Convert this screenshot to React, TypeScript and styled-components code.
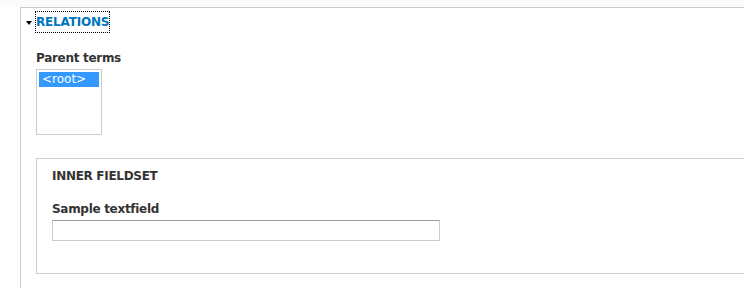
import React from "react";
import styled, { createGlobalStyle } from "styled-components";

const Global = createGlobalStyle`
  html, body { margin: 0; padding: 0; background: #fff; }
  body {
    font-family: "DejaVu Sans", Verdana, sans-serif;
    color: #333;
    overflow: hidden;
  }
`;

const Page = styled.div`
  width: 744px;
  height: 288px;
  overflow: hidden;
  background: linear-gradient(#fbfbfb 0, #fbfbfb 7px, #fff 7px);
`;

const Fieldset = styled.fieldset<{ $inner?: boolean }>`
  margin: ${(p) => (p.$inner ? "0" : "7px 0 0 20px")};
  padding: ${(p) => (p.$inner ? "10px 15px 32px" : "3px 0 40px 0")};
  border: 1px solid #ccc;
  min-width: 0;
  width: ${(p) => (p.$inner ? "740px" : "760px")};
  box-sizing: border-box;
  background: #fff;
`;

const LegendRow = styled.div`
  display: flex;
  align-items: center;
  height: 22px;
  padding-left: 5px;
  gap: 4px;
`;

const Toggle = styled.span`
  width: 0;
  height: 0;
  border-left: 3.5px solid transparent;
  border-right: 3.5px solid transparent;
  border-top: 4px solid #000;
  margin-top: 2px;
`;

const LegendLink = styled.a`
  color: #0074bd;
  text-decoration: none;
  font-weight: bold;
  font-size: 12px;
  text-transform: uppercase;
  outline: 1px dotted #000;
  outline-offset: 0;
  padding: 3px 0;
  line-height: 14px;
  letter-spacing: -0.2px;
`;

const Wrapper = styled.div`
  padding: 18px 0 0 15px;
`;

const Label = styled.label`
  display: block;
  font-weight: bold;
  font-size: 12px;
  line-height: 15px;
  margin-bottom: 3px;
  letter-spacing: -0.3px;
`;

const Select = styled.div`
  width: 66px;
  height: 66px;
  box-sizing: border-box;
  border: 1px solid #ccc;
  padding: 2px;
  margin-bottom: 23px;
`;

const Option = styled.div<{ $selected?: boolean }>`
  height: 15px;
  line-height: 15px;
  font-size: 12px;
  padding-left: 3px;
  background: ${(p) => (p.$selected ? "#3399ff" : "transparent")};
  color: ${(p) => (p.$selected ? "#fff" : "#333")};
`;

const InnerLegend = styled.div`
  font-weight: bold;
  font-size: 12px;
  line-height: 15px;
  text-transform: uppercase;
  margin-bottom: 18px;
  letter-spacing: -0.3px;
`;

const TextInput = styled.input`
  display: block;
  width: 388px;
  height: 21px;
  box-sizing: border-box;
  border: 1px solid #ccc;
  border-top-color: #999;
  padding: 2px 4px;
  margin: 0;
  font-family: inherit;
`;

export default function App() {
  return (
    <Page>
      <Global />
      <Fieldset>
        <LegendRow>
          <Toggle />
          <LegendLink href="#">Relations</LegendLink>
        </LegendRow>
        <Wrapper>
          <Label>Parent terms</Label>
          <Select>
            <Option $selected>&lt;root&gt;</Option>
          </Select>
          <Fieldset $inner>
            <InnerLegend>Inner fieldset</InnerLegend>
            <Label>Sample textfield</Label>
            <TextInput type="text" />
          </Fieldset>
        </Wrapper>
      </Fieldset>
    </Page>
  );
}
